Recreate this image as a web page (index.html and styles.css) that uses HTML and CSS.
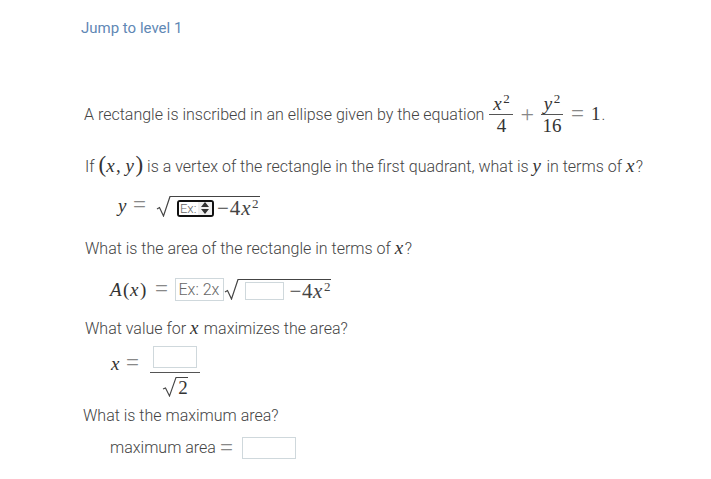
FILE: index.html
```html
<!DOCTYPE html>
<html lang="en">
<head>
  <meta charset="UTF-8">
  <title>Jump to level 1</title>
  <link rel="stylesheet" href="styles.css">
</head>
<body>
  <a class="jump" href="#">Jump to level 1</a>

  <div class="problem">
    <div class="row row-ellipse">
      <span class="lead">A rectangle is inscribed in an ellipse given by the equation</span>
      <span class="math">
        <span class="frac frac-a">
          <span class="num"><i>x</i><sup>2</sup></span>
          <span class="den">4</span>
        </span>
        <span class="op op-plus">+</span>
        <span class="frac frac-b">
          <span class="num"><i>y</i><sup>2</sup></span>
          <span class="den">16</span>
        </span>
        <span class="op op-wide">=</span>
        <span>1</span>
      </span>
      <span class="dot">.</span>
    </div>

    <div class="row row-vertex">
      <span>If</span>
      <span class="math"><span class="paren">(</span><i>x</i>,&nbsp;<i>y</i><span class="paren">)</span></span>
      <span>is a vertex of the rectangle in the first quadrant, what is</span>
      <i class="math">y</i>
      <span>in terms of</span>
      <span><i class="math">x</i>?</span>
    </div>

    <div class="eq eq-y">
      <span class="math"><i>y</i><span class="op">=</span></span>
      <span class="sqrt">
        <svg class="radical" viewBox="0 0 16 21" width="16" height="21">
          <path d="M1 13 L3.5 11.5 L7.5 20 L14 0.5 L16 0.5" fill="none" stroke="#444" stroke-width="1.2"/>
        </svg>
        <span class="radicand">
          <span class="spin-input">
            <input class="spin-text" type="text" placeholder="Ex: 1">
            <span class="spin-arrows">
              <svg viewBox="0 0 8 12" width="8" height="12"><path d="M4 0 L8 5 L0 5 Z M4 12 L8 7 L0 7 Z" fill="#333"/></svg>
            </span>
          </span>
          <span class="math term">−4<i>x</i><sup>2</sup></span>
        </span>
      </span>
    </div>

    <div class="row row-area">What is the area of the rectangle in terms of <i class="math">x</i>?</div>

    <div class="eq eq-a">
      <span class="math"><i>A</i>(<i>x</i>)<span class="op">=</span></span>
      <input class="answer answer-coef" type="text" placeholder="Ex: 2x">
      <span class="sqrt">
        <svg class="radical" viewBox="0 0 16 21" width="16" height="21">
          <path d="M1 13 L3.5 11.5 L7.5 20 L14 0.5 L16 0.5" fill="none" stroke="#444" stroke-width="1.2"/>
        </svg>
        <span class="radicand">
          <input class="answer answer-root" type="text">
          <span class="math term term-a">−4<i>x</i><sup>2</sup></span>
        </span>
      </span>
    </div>

    <div class="row row-value">What value for <i class="math">x</i> maximizes the area?</div>

    <div class="eq eq-x">
      <span class="math"><i>x</i><span class="op">=</span></span>
      <span class="frac frac-input">
        <span class="num"><input class="answer answer-num" type="text"></span>
        <span class="den math root2">
          <svg viewBox="0 0 16 20" width="16" height="20"><path d="M1 12 L3.5 11 L7.5 19 L14 0.5 L16 0.5" fill="none" stroke="#444" stroke-width="1.1"/></svg><span class="root2-val">2</span>
        </span>
      </span>
    </div>

    <div class="row row-max">What is the maximum area?</div>

    <div class="eq eq-max">
      <span>maximum area</span>
      <span class="math op">=</span>
      <input class="answer answer-max" type="text">
    </div>
  </div>
</body>
</html>
```

FILE: styles.css
```css
body {
  margin: 0;
  padding: 19px 0 0 81px;
  font-family: Roboto, sans-serif;
  font-weight: 300;
  font-size: 16px;
  line-height: 18px;
  color: #444;
  background: #fff;
}

.jump {
  display: block;
  font-size: 15px;
  font-weight: 400;
  color: #5f88b5;
  text-decoration: none;
}

.math {
  font-family: "Liberation Serif", serif;
  font-weight: 400;
  font-size: 19px;
  line-height: 18px;
  color: #333;
}

.math i, i.math {
  font-style: italic;
  letter-spacing: 1.5px;
}

sup {
  font-size: 13px;
  line-height: 0;
  vertical-align: 7px;
}

.op {
  margin: 0 6px 0 5px;
  font-size: 23px;
  color: #888;
}

.op-plus {
  margin: 0 6px;
  font-size: 24px;
}

.op-wide {
  margin: 0 7px;
}

.row-ellipse {
  display: flex;
  align-items: center;
  gap: 4px;
  margin: 53px 0 0 3px;
}

.row-ellipse .math {
  display: inline-flex;
  align-items: center;
}

.lead {
  padding-top: 2px;
}

.dot {
  margin-left: -3px;
  padding-top: 2px;
}

.frac {
  display: inline-flex;
  flex-direction: column;
  align-items: center;
  padding: 0 1px;
}

.frac .num {
  align-self: stretch;
  border-bottom: 1px solid #555;
  text-align: center;
  line-height: 27px;
  height: 24px;
}

.frac .den {
  line-height: 22px;
}

.frac-a {
  width: 24px;
}

.frac-b {
  width: 22px;
}

.row-vertex {
  margin: 19px 0 0 4px;
}

.paren {
  font-size: 23px;
}

.eq {
  display: flex;
  align-items: center;
}

.eq-y {
  align-items: flex-start;
  margin: 20px 0 0 37px;
}

.sqrt {
  display: inline-flex;
  align-items: flex-start;
}

.radicand {
  display: inline-flex;
  align-items: center;
  border-top: 1px solid #444;
  padding: 2px 0 0 6px;
}

.radical {
  display: block;
  margin-right: -1px;
}

.eq-y .math .op {
  margin-right: 10px;
}

.term {
  margin-left: 3px;
  font-size: 21px;
  letter-spacing: 1px;
  color: #444;
}

.term-a {
  margin-left: 6px;
}

.spin-input {
  box-sizing: border-box;
  display: inline-flex;
  align-items: center;
  width: 37px;
  height: 17px;
  border: 2px solid #111;
  border-radius: 3px;
  overflow: hidden;
}

.spin-text {
  flex: 1;
  min-width: 0;
  height: 13px;
  margin: 0;
  padding: 0 0 0 1px;
  border: none;
  outline: none;
  font-family: Roboto, sans-serif;
  font-weight: 300;
  font-size: 13px;
}

.spin-text::placeholder {
  color: #666;
  opacity: 1;
}

.spin-arrows {
  display: flex;
  flex: none;
  width: 14px;
  height: 13px;
  justify-content: center;
  align-items: center;
  background: #f0f0f0;
}

.row-area {
  margin: 22px 0 0 4px;
}

.answer {
  box-sizing: border-box;
  display: block;
  margin: 0;
  padding: 0 3px;
  border: 1px solid #cfd8dc;
  border-radius: 0;
  outline: none;
  background: #fff;
  font-family: Roboto, sans-serif;
  font-weight: 300;
  font-size: 16px;
  color: #444;
}

.answer::placeholder {
  color: #666;
  opacity: 1;
}

.eq-a {
  margin: 20px 0 0 29px;
}

.eq-a .math {
  letter-spacing: 0.6px;
}

.eq-a .math .op {
  margin: 0 6px 0 8px;
}

.answer-coef {
  width: 49px;
  height: 23px;
}

.answer-root {
  width: 39px;
  height: 18px;
}

.row-value {
  margin: 18px 0 0 4px;
}

.eq-x {
  align-items: flex-start;
  margin: 8px 0 0 30px;
}

.eq-x > .math {
  margin-top: 8px;
}

.eq-x .math .op {
  margin-right: 11px;
}

.frac-input {
  padding: 0;
}

.frac-input .num {
  box-sizing: content-box;
  width: 50px;
  height: 22px;
  padding-bottom: 4px;
  line-height: 0;
}

.answer-num {
  width: 44px;
  height: 22px;
  margin: 0 auto;
}

.root2 {
  display: inline-flex;
  align-items: flex-start;
  margin-top: 4px;
}

.root2-val {
  border-top: 1px solid #444;
  line-height: 19px;
  height: 19px;
}

.row-max {
  margin: 10px 0 0 2px;
}

.eq-max {
  margin: 12px 0 0 29px;
}

.eq-max .op {
  margin: 0 9px 0 4px;
}

.answer-max {
  width: 54px;
  height: 22px;
}
```
